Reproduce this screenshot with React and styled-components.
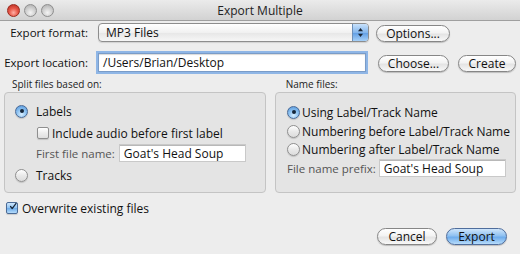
import React from 'react';
import styled, { createGlobalStyle } from 'styled-components';

const Global = createGlobalStyle`
  html, body { margin: 0; padding: 0; background: #ededed; }
  body {
    font-family: "Open Sans", "DejaVu Sans", sans-serif;
    font-size: 11.5px;
    color: #111;
  }
`;

const Window = styled.div`
  width: 520px;
  height: 254px;
  background: #ededed;
  overflow: hidden;
  display: flex;
  flex-direction: column;
`;

const TitleBar = styled.div`
  height: 21px;
  box-sizing: border-box;
  display: grid;
  grid-template-columns: 1fr auto 1fr;
  align-items: center;
  background: linear-gradient(#ebebeb, #d2d2d2);
  border-bottom: 1px solid #9f9f9f;
  font-size: 12px;
  color: #222;
`;

const Lights = styled.div`
  display: flex;
  gap: 4px;
  padding-left: 7px;
`;

const Light = styled.span`
  width: 13px;
  height: 13px;
  border-radius: 50%;
  box-sizing: border-box;
  border: 1px solid ${p => (p.$red ? '#9a2a1e' : '#8e8e8e')};
  background: ${p =>
    p.$red
      ? 'radial-gradient(circle at 50% 70%, #ffb0a6 0%, #e8594a 45%, #b3261a 100%)'
      : 'radial-gradient(circle at 50% 70%, #f4f4f4 0%, #cfcfcf 50%, #a9a9a9 100%)'};
`;

const Title = styled.div`
  text-align: center;
`;

const Body = styled.div`
  display: flex;
  flex-direction: column;
`;

const FormRow = styled.div`
  display: flex;
  align-items: center;
  margin-top: ${p => p.$top}px;
  height: ${p => p.$h || 20}px;
`;

const FieldLabel = styled.div`
  width: 88px;
  flex-shrink: 0;
  text-align: right;
  font-size: 11.5px;
`;

const Select = styled.div`
  margin-left: 10px;
  width: 271px;
  height: 19px;
  box-sizing: border-box;
  border: 1px solid #8d8d8d;
  border-radius: 4px;
  background: linear-gradient(#ffffff, #f1f1f1 50%, #e6e6e6 51%, #f6f6f6);
  display: flex;
  align-items: center;
  overflow: hidden;
  box-shadow: 0 1px 1px rgba(0,0,0,0.12);
`;

const SelectText = styled.span`
  flex: 1;
  padding-left: 7px;
  font-size: 12px;
`;

const Stepper = styled.span`
  width: 15px;
  height: 100%;
  background: linear-gradient(#c9e2fb, #84b6ec 50%, #5e9ce3 51%, #a6d0f8);
  border-left: 1px solid #6d8fb8;
  display: flex;
  align-items: center;
  justify-content: center;
`;

const TextField = styled.div`
  width: ${p => p.$w}px;
  height: ${p => p.$h || 17}px;
  box-sizing: border-box;
  background: #fff;
  border: 1px solid ${p => (p.$focus ? '#7a9cc8' : '#c9c9c9')};
  box-shadow: ${p =>
    p.$focus ? '0 0 0 2px #8fb6e6, inset 0 1px 1px rgba(0,0,0,0.15)' : 'inset 0 1px 0 #b8b8b8'};
  display: flex;
  align-items: center;
  padding-left: 4px;
  margin-left: ${p => p.$ml || 0}px;
  font-size: ${p => p.$fs || 12}px;
  white-space: nowrap;
`;

const Button = styled.div`
  width: ${p => p.$w}px;
  height: 17px;
  box-sizing: border-box;
  margin-left: ${p => p.$ml || 0}px;
  margin-top: ${p => p.$mt || 0}px;
  border-radius: 9px;
  border: 1px solid ${p => (p.$primary ? '#4f6d9c' : '#868686')};
  background: ${p =>
    p.$primary
      ? 'linear-gradient(#cfe5fb, #8fc1f1 45%, #6eacec 55%, #b7dcfb)'
      : 'linear-gradient(#ffffff, #f3f3f3 45%, #e4e4e4 55%, #f8f8f8)'};
  box-shadow: 0 1px 1px rgba(0,0,0,0.2);
  display: flex;
  align-items: center;
  justify-content: center;
  font-size: 12px;
  color: #111;
  flex-shrink: 0;
`;

const GroupHeads = styled.div`
  display: flex;
  margin-top: 6px;
  height: 12px;
  align-items: center;
  font-size: 10px;
  color: #222;
`;

const GroupHead = styled.span`
  margin-left: ${p => p.$ml}px;
`;

const Groups = styled.div`
  display: flex;
  gap: 9px;
  padding-left: 4px;
  margin-top: 2px;
`;

const Group = styled.div`
  width: ${p => p.$w}px;
  height: 101px;
  box-sizing: border-box;
  border: 1px solid #c4c4c4;
  border-radius: 4px;
  background: #e4e4e4;
  display: flex;
  flex-direction: column;
  padding-left: ${p => p.$pl}px;
`;

const OptRow = styled.div`
  display: flex;
  align-items: center;
  height: 18px;
  margin-top: ${p => p.$top}px;
  margin-left: ${p => p.$ml || 0}px;
  gap: ${p => p.$gap || 3}px;
  font-size: 12px;
  white-space: nowrap;
`;

const Muted = styled.span`
  color: #555;
  font-size: 11.5px;
`;

const Radio = styled.span`
  width: 13px;
  height: 13px;
  border-radius: 50%;
  box-sizing: border-box;
  flex-shrink: 0;
  border: 1px solid ${p => (p.$on ? '#4a6a96' : '#8f8f8f')};
  background: ${p =>
    p.$on
      ? 'radial-gradient(circle at 50% 75%, #d8eeff 0%, #8fc3f1 45%, #4f93da 100%)'
      : 'linear-gradient(#ffffff, #e9e9e9 50%, #dcdcdc)'};
  box-shadow: 0 1px 1px rgba(0,0,0,0.15);
  display: flex;
  align-items: center;
  justify-content: center;
  &::after {
    content: '';
    width: 4px;
    height: 4px;
    border-radius: 50%;
    background: #15263a;
    display: ${p => (p.$on ? 'block' : 'none')};
  }
`;

const Check = styled.span`
  width: 12px;
  height: 12px;
  box-sizing: border-box;
  flex-shrink: 0;
  border-radius: 2px;
  border: 1px solid ${p => (p.$on ? '#4a6a96' : '#8f8f8f')};
  background: ${p =>
    p.$on
      ? 'linear-gradient(#cde6fc, #8ec2f1 50%, #6aaae9 51%, #b5dbfa)'
      : 'linear-gradient(#ffffff, #ececec 50%, #dfdfdf)'};
  box-shadow: 0 1px 1px rgba(0,0,0,0.15);
  display: flex;
  align-items: center;
  justify-content: center;
`;

const Footer = styled.div`
  display: flex;
  justify-content: flex-end;
  padding-right: 13px;
  margin-top: 11px;
`;

const Tick = () => (
  <svg width="13" height="13" viewBox="0 0 13 13" style={{ marginLeft: 2, marginTop: -3 }}>
    <path d="M2.5 6.5 L5.2 9.8 L11.5 1.5" fill="none" stroke="#16263a" strokeWidth="2" strokeLinecap="round" strokeLinejoin="round" />
  </svg>
);

const Arrows = () => (
  <svg width="7" height="11" viewBox="0 0 7 11">
    <path d="M3.5 1 L6 4.2 L1 4.2 Z" fill="#1b2634" />
    <path d="M3.5 10 L6 6.8 L1 6.8 Z" fill="#1b2634" />
  </svg>
);

export default function App() {
  return (
    <>
      <Global />
      <Window>
        <TitleBar>
          <Lights>
            <Light $red />
            <Light />
            <Light />
          </Lights>
          <Title>Export Multiple</Title>
          <span />
        </TitleBar>
        <Body>
          <FormRow $top={1} $h={20}>
            <FieldLabel>Export format:</FieldLabel>
            <Select>
              <SelectText>MP3 Files</SelectText>
              <Stepper><Arrows /></Stepper>
            </Select>
            <Button $w={74} $ml={7} $mt={3}>Options...</Button>
          </FormRow>
          <FormRow $top={10} $h={20}>
            <FieldLabel>Export location:</FieldLabel>
            <TextField $w={268} $h={19} $ml={10} $focus>/Users/Brian/Desktop</TextField>
            <Button $w={71} $ml={12} $mt={3}>Choose...</Button>
            <Button $w={58} $ml={9} $mt={3}>Create</Button>
          </FormRow>
          <GroupHeads>
            <GroupHead $ml={12}>Split files based on:</GroupHead>
            <GroupHead $ml={184}>Name files:</GroupHead>
          </GroupHeads>
          <Groups>
            <Group $w={262} $pl={10}>
              <OptRow $top={9} $gap={8}>
                <Radio $on />
                Labels
              </OptRow>
              <OptRow $top={4} $ml={22}>
                <Check />
                Include audio before first label
              </OptRow>
              <OptRow $top={2} $ml={21}>
                <Muted>First file name:</Muted>
                <TextField $w={127} $h={18} $ml={1}>Goat's Head Soup</TextField>
              </OptRow>
              <OptRow $top={4} $gap={8}>
                <Radio />
                Tracks
              </OptRow>
            </Group>
            <Group $w={241} $pl={11}>
              <OptRow $top={10} $gap={2}>
                <Radio $on />
                Using Label/Track Name
              </OptRow>
              <OptRow $top={1} $gap={2}>
                <Radio />
                Numbering before Label/Track Name
              </OptRow>
              <OptRow $top={0} $gap={2}>
                <Radio />
                Numbering after Label/Track Name
              </OptRow>
              <OptRow $top={1}>
                <Muted>File name prefix:</Muted>
                <TextField $w={127} $h={18} $ml={0}>Goat's Head Soup</TextField>
              </OptRow>
            </Group>
          </Groups>
          <OptRow $top={6} $ml={6} $gap={4}>
            <Check $on><Tick /></Check>
            Overwrite existing files
          </OptRow>
          <Footer>
            <Button $w={60}>Cancel</Button>
            <Button $w={61} $ml={9} $primary>Export</Button>
          </Footer>
        </Body>
      </Window>
    </>
  );
}
